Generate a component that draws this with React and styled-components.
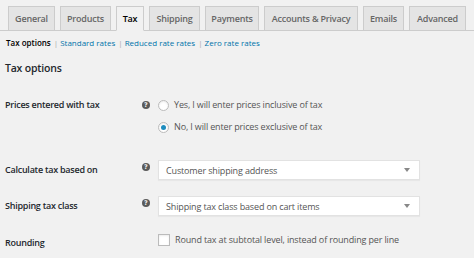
import React from "react";
import styled, { createGlobalStyle } from "styled-components";

const Global = createGlobalStyle`
  html, body { margin: 0; padding: 0; background: #f1f1f1; }
  body { font-family: "Open Sans", "Noto Sans", sans-serif; color: #23282d; }
`;

const Page = styled.div`
  width: 474px;
  height: 258px;
  overflow: hidden;
  background: #f1f1f1;
`;

const Nav = styled.nav`
  display: flex;
  align-items: flex-end;
  gap: 5px;
  padding: 5px 0 0 8px;
  border-bottom: 1px solid #ccc;
  height: 25px;
`;

const Tab = styled.a`
  box-sizing: border-box;
  width: ${(p) => p.$w}px;
  height: 25px;
  margin-bottom: -1px;
  display: flex;
  align-items: center;
  justify-content: center;
  font-size: 9px;
  letter-spacing: -0.2px;
  font-weight: 600;
  color: ${(p) => (p.$active ? "#000" : "#666")};
  background: ${(p) => (p.$active ? "#f1f1f1" : "#e4e4e4")};
  border: 1px solid #ccc;
  border-bottom-color: ${(p) => (p.$active ? "#f1f1f1" : "#ccc")};
  text-decoration: none;
  white-space: nowrap;
`;

const Sub = styled.ul`
  list-style: none;
  display: flex;
  margin: 6px 0 0 6px;
  padding: 0;
  font-size: 8px;
  line-height: 12px;
  color: #666;
`;

const SubItem = styled.li`
  white-space: nowrap;
  &:not(:last-child)::after {
    content: "|";
    margin: 0 2px 0 3px;
    color: #aaa;
  }
`;

const SubLink = styled.a`
  color: ${(p) => (p.$current ? "#000" : "#0073aa")};
  font-weight: ${(p) => (p.$current ? 600 : 400)};
  text-decoration: none;
`;

const Heading = styled.h2`
  margin: 11px 0 0 5px;
  font-size: 10.5px;
  letter-spacing: -0.2px;
  font-weight: 600;
  line-height: 16px;
  color: #23282d;
`;

const Table = styled.div`
  display: flex;
  flex-direction: column;
  margin-top: 22px;
`;

const Row = styled.div`
  display: grid;
  grid-template-columns: 137px 16px 1fr;
  align-items: start;
  padding-left: 5px;
  min-height: ${(p) => p.$h}px;
`;

const Label = styled.div`
  font-size: 9px;
  letter-spacing: -0.25px;
  font-weight: 600;
  line-height: 14px;
  padding-top: ${(p) => p.$pt || 0}px;
  color: #23282d;
  white-space: nowrap;
`;

const HelpCell = styled.div`
  padding-top: ${(p) => p.$pt || 0}px;
  display: flex;
`;

const Help = styled.span`
  width: 8px;
  height: 8px;
  border-radius: 50%;
  background: #5a5a5a;
  color: #f1f1f1;
  font-size: 6.5px;
  font-weight: 700;
  line-height: 8px;
  text-align: center;
  font-family: "DejaVu Sans", sans-serif;
`;

const Field = styled.div`
  display: flex;
  flex-direction: column;
  gap: ${(p) => p.$gap || 0}px;
  padding-top: ${(p) => p.$pt || 0}px;
`;

const Choice = styled.label`
  display: flex;
  align-items: center;
  gap: 5px;
  font-size: 9px;
  letter-spacing: -0.15px;
  line-height: 14px;
  color: #555;
  white-space: nowrap;
`;

const Radio = styled.span`
  box-sizing: border-box;
  width: 11px;
  height: 11px;
  border-radius: 50%;
  border: 1px solid #bbb;
  background: #fff;
  box-shadow: inset 0 1px 2px rgba(0, 0, 0, 0.08);
  display: flex;
  align-items: center;
  justify-content: center;
  &::after {
    content: "";
    width: 5px;
    height: 5px;
    border-radius: 50%;
    background: #1e8cbe;
    display: ${(p) => (p.$checked ? "block" : "none")};
  }
`;

const Box = styled.span`
  box-sizing: border-box;
  width: 12px;
  height: 12px;
  border: 1px solid #bbb;
  background: #fff;
  box-shadow: inset 0 1px 2px rgba(0, 0, 0, 0.08);
`;

const Select = styled.div`
  box-sizing: border-box;
  width: 262px;
  height: 20px;
  background: #fff;
  border: 1px solid #e2e2e2;
  box-shadow: 0 1px 1px rgba(0, 0, 0, 0.04);
  display: flex;
  align-items: center;
  justify-content: space-between;
  padding: 0 9px 0 7px;
  font-size: 9px;
  letter-spacing: -0.15px;
  color: #555;
  white-space: nowrap;
`;

const Arrow = styled.span`
  width: 0;
  height: 0;
  border-left: 3px solid transparent;
  border-right: 3px solid transparent;
  border-top: 4px solid #888;
`;

const tabs = [
  ["General", 47],
  ["Products", 51],
  ["Tax", 28],
  ["Shipping", 51],
  ["Payments", 54],
  ["Accounts & Privacy", 94],
  ["Emails", 41],
  ["Advanced", 57],
];

export default function App() {
  return (
    <Page>
      <Global />
      <Nav>
        {tabs.map(([t, w]) => (
          <Tab key={t} $w={w} $active={t === "Tax"}>
            {t}
          </Tab>
        ))}
      </Nav>
      <Sub>
        <SubItem>
          <SubLink $current>Tax options</SubLink>
        </SubItem>
        <SubItem>
          <SubLink>Standard rates</SubLink>
        </SubItem>
        <SubItem>
          <SubLink>Reduced rate rates</SubLink>
        </SubItem>
        <SubItem>
          <SubLink>Zero rate rates</SubLink>
        </SubItem>
      </Sub>
      <Heading>Tax options</Heading>
      <Table>
        <Row $h={59}>
          <Label>Prices entered with tax</Label>
          <HelpCell $pt={3}>
            <Help>?</Help>
          </HelpCell>
          <Field $gap={8}>
            <Choice>
              <Radio />
              Yes, I will enter prices inclusive of tax
            </Choice>
            <Choice>
              <Radio $checked />
              No, I will enter prices exclusive of tax
            </Choice>
          </Field>
        </Row>
        <Row $h={38}>
          <Label $pt={6}>Calculate tax based on</Label>
          <HelpCell $pt={6}>
            <Help>?</Help>
          </HelpCell>
          <Field $pt={3}>
            <Select>
              Customer shipping address
              <Arrow />
            </Select>
          </Field>
        </Row>
        <Row $h={38}>
          <Label $pt={4}>Shipping tax class</Label>
          <HelpCell $pt={4}>
            <Help>?</Help>
          </HelpCell>
          <Field $pt={1}>
            <Select>
              Shipping tax class based on cart items
              <Arrow />
            </Select>
          </Field>
        </Row>
        <Row $h={20}>
          <Label $pt={3}>Rounding</Label>
          <HelpCell />
          <Field>
            <Choice>
              <Box />
              Round tax at subtotal level, instead of rounding per line
            </Choice>
          </Field>
        </Row>
      </Table>
    </Page>
  );
}
